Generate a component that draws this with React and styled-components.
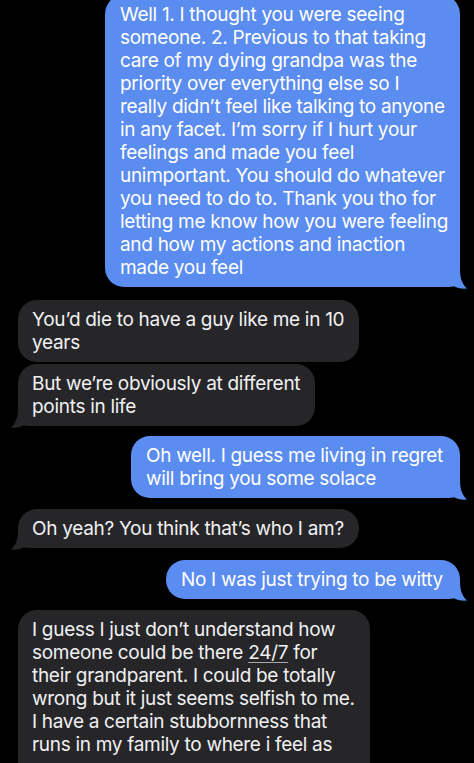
import React from "react";
import styled, { createGlobalStyle } from "styled-components";

const Global = createGlobalStyle`
  html, body { margin: 0; padding: 0; background: #000; }
  body { font-family: Inter, "Noto Sans", "Liberation Sans", sans-serif; -webkit-font-smoothing: antialiased; }
`;

const Screen = styled.div`
  width: 474px;
  height: 763px;
  overflow: hidden;
  background: #000;
`;

const Thread = styled.div`
  display: flex;
  flex-direction: column;
  padding: 0 14px 0 18px;
  margin-top: -5px;
`;

const Row = styled.div`
  display: flex;
  justify-content: ${(p) => (p.$me ? "flex-end" : "flex-start")};
  margin-top: ${(p) => p.$gap}px;
`;

const Bubble = styled.div`
  position: relative;
  box-sizing: border-box;
  max-width: 355px;
  padding: ${(p) => (p.$me ? "8px 17px 8px 15px" : "8px 15px 8px 14px")};
  padding-bottom: ${(p) => (p.$extra ? "40px" : "8px")};
  border-radius: 19px;
  background: ${(p) => (p.$me ? "#5b8cf0" : "#262628")};
  color: ${(p) => (p.$me ? "#ffffff" : "#f1f1f3")};
  font-size: 19px;
  line-height: 23px;
  letter-spacing: -0.3px;
  white-space: nowrap;
`;

const Text = styled.div`
  position: relative;
  z-index: 1;
`;

const TailSvg = styled.svg`
  position: absolute;
  z-index: 0;
  bottom: -2px;
  width: 25px;
  height: 20px;
  ${(p) => (p.$me ? "right: -7px;" : "left: -7px; transform: scaleX(-1);")}
`;

const Link = styled.span`
  text-decoration: underline;
  text-decoration-thickness: 1px;
  text-underline-offset: 3px;
  text-decoration-color: #a8a8ac;
`;

function Tail({ me }) {
  return (
    <TailSvg $me={me} viewBox="0 0 25 20" aria-hidden="true">
      <path
        d="M0 0 H18 C18 9 20 15 25 19.5 C20 20 15 19 12 17.2 C9 18 5 18 0 18 Z"
        fill={me ? "#5b8cf0" : "#262628"}
      />
    </TailSvg>
  );
}

const messages = [
  {
    me: true,
    gap: 0,
    tail: true,
    lines: [
      "Well 1. I thought you were seeing",
      "someone. 2. Previous to that taking",
      "care of my dying grandpa was the",
      "priority over everything else so I",
      "really didn’t feel like talking to anyone",
      "in any facet. I’m sorry if I hurt your",
      "feelings and made you feel",
      "unimportant. You should do whatever",
      "you need to do to. Thank you tho for",
      "letting me know how you were feeling",
      "and how my actions and inaction",
      "made you feel",
    ],
  },
  { me: false, gap: 13, tail: false, lines: ["You’d die to have a guy like me in 10", "years"] },
  { me: false, gap: 2, tail: true, lines: ["But we’re obviously at different", "points in life"] },
  { me: true, gap: 10, tail: true, lines: ["Oh well. I guess me living in regret", "will bring you some solace"] },
  { me: false, gap: 11, tail: true, lines: ["Oh yeah? You think that’s who I am?"] },
  { me: true, gap: 12, tail: true, lines: ["No I was just trying to be witty"] },
  {
    me: false,
    gap: 11,
    tail: false,
    extra: true,
    lines: [
      "I guess I just don’t understand how",
      ["someone could be there ", <Link key="l">24/7</Link>, " for"],
      "their grandparent. I could be totally",
      "wrong but it just seems selfish to me.",
      "I have a certain stubbornness that",
      "runs in my family to where i feel as",
    ],
  },
];

export default function App() {
  return (
    <Screen>
      <Global />
      <Thread>
        {messages.map((m, i) => (
          <Row key={i} $me={m.me} $gap={m.gap}>
            <Bubble $me={m.me} $extra={m.extra}>
              <Text>
                {m.lines.map((l, j) => (
                  <React.Fragment key={j}>
                    {j > 0 && <br />}
                    {l}
                  </React.Fragment>
                ))}
              </Text>
              {m.tail && <Tail me={m.me} />}
            </Bubble>
          </Row>
        ))}
      </Thread>
    </Screen>
  );
}
